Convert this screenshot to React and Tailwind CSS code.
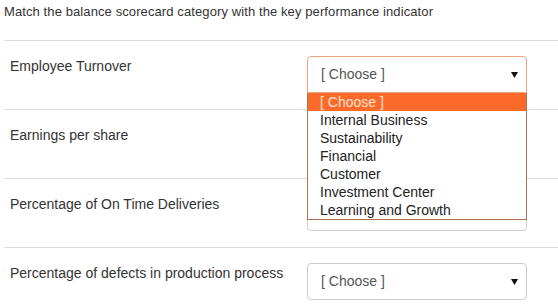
import React from 'react';

const options = [
    '[ Choose ]',
    'Internal Business',
    'Sustainability',
    'Financial',
    'Customer',
    'Investment Center',
    'Learning and Growth',
];

const rows = [
    'Employee Turnover',
    'Earnings per share',
    'Percentage of On Time Deliveries',
    'Percentage of defects in production process',
];

// Small black triangle used as the select's arrow
const Arrow = () => (
    <svg width="7" height="6" viewBox="0 0 7 6" className="shrink-0">
        <path d="M0 0 H7 L3.5 6 Z" fill="#111" />
    </svg>
);

const Select = ({ open }) => (
    <div className="relative">
        <div
            className={
                'w-[220px] h-[37px] flex items-center justify-between pl-[13px] pr-[8px] rounded-[4px] border bg-white text-[#555] ' +
                (open ? 'border-[#eea57c] rounded-b-none' : 'border-[#ccc]')
            }
        >
            <span>[ Choose ]</span>
            <Arrow />
        </div>
        {open && (
            <ul className="absolute z-10 left-0 top-[37px] w-[220px] bg-white border border-t-0 border-[#a87350] text-[#222]">
                {options.map((opt, i) => (
                    <li
                        key={opt}
                        className={
                            'h-[18px] leading-[18px] pl-[12px] ' +
                            (i === 0 ? 'bg-[#fc6a2b] text-[#fde2cf]' : '')
                        }
                    >
                        {opt}
                    </li>
                ))}
            </ul>
        )}
    </div>
);

const App = () => {
    return (
        <div className="w-[558px] h-[305px] overflow-hidden bg-white pl-[4px] text-[#333] font-[family-name:'Liberation_Sans',Arial,sans-serif]">
            <p className="h-[40px] pt-[4px] text-[13px] leading-[16px] tracking-[0.1px]">
                Match the balance scorecard category with the key performance indicator
            </p>
            {rows.map((label, i) => (
                <div key={label} className="flex h-[69px] border-t border-[#dcdcdc] text-[14px]">
                    <div className="w-[303px] pl-[6px] pt-[15px] leading-[20px]">{label}</div>
                    <div className="pt-[15px]">
                        <Select open={i === 0} />
                    </div>
                </div>
            ))}
        </div>
    );
};

export default App;
